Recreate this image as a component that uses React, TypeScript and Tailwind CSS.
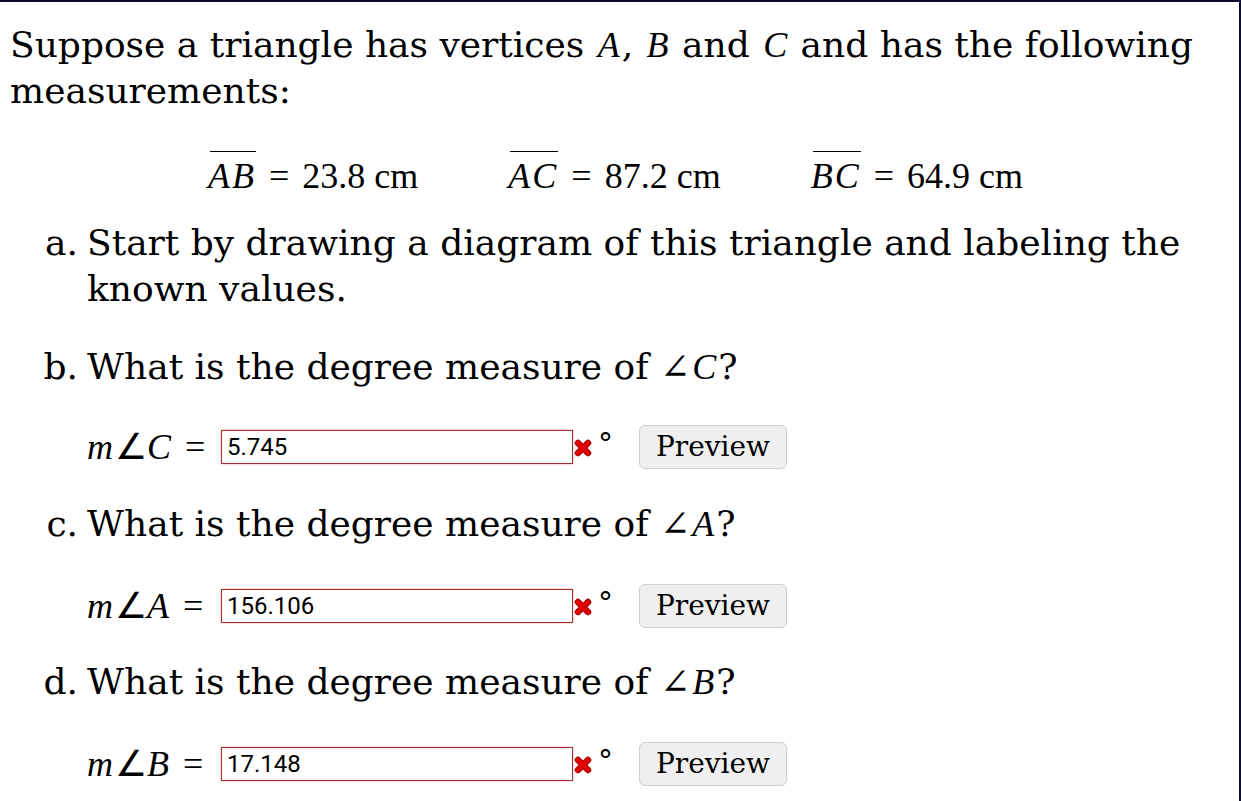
import React from 'react';

const serif = "font-['DejaVu_Serif',serif]";
const mathFont = "font-['Liberation_Serif',serif]";

const V = ({ children }: { children: React.ReactNode }) => (
  <span className={`${mathFont} italic px-[2px]`}>{children}</span>
);

const Seg = ({ name, value }: { name: string; value: string }) => (
  <span className={`${mathFont} text-[36px] leading-[40px] whitespace-nowrap`}>
    <span className="relative italic tracking-[2px]">
      <span className="absolute left-[2px] right-0 top-[-5px] h-px bg-black" />
      {name}
    </span>
    <span className="mx-[13px]">=</span>
    {value} cm
  </span>
);

const Cross = () => (
  <svg width="18" height="18" viewBox="0 0 18 18" className="shrink-0">
    <path d="M4 4 L14 14 M14 4 L4 14" stroke="#a80000" strokeWidth="6.5" strokeLinecap="round" />
    <path d="M4 4 L14 14 M14 4 L4 14" stroke="#e10000" strokeWidth="4.5" strokeLinecap="round" />
  </svg>
);

const AnswerRow = ({ angle, value, mt }: { angle: string; value: string; mt: string }) => (
  <div className={`flex items-center h-[44px] pl-[87px] ${mt}`}>
    <span className={`${mathFont} text-[36px] w-[134px] whitespace-nowrap`}>
      <span className="italic tracking-[2px]">m</span>∠<span className="italic">{angle}</span>
      <span className="ml-[14px]">=</span>
    </span>
    <div className="w-[352px] h-[34px] border border-[#a03030] shadow-[0_0_2px_#f4a0a0] flex items-center pl-[5px] font-['Roboto',sans-serif] text-[24px]">
      {value}
    </div>
    <div className="ml-[1px] mt-[2px]">
      <Cross />
    </div>
    <span className="font-['DejaVu_Sans',sans-serif] text-[30px] leading-none ml-[6px] -mt-[6px]">°</span>
    <button className={`${serif} ml-[26px] w-[148px] h-[44px] bg-[#efefef] border border-[#cfcfcf] rounded-[6px] text-[28px] leading-none`}>
      Preview
    </button>
  </div>
);

const Item = ({ mark, children, mt }: { mark: string; children: React.ReactNode; mt: string }) => (
  <div className={`flex text-[36px] leading-[46px] ${mt}`}>
    <span className="w-[78px] text-right shrink-0">{mark}</span>
    <div className="pl-[9px]">{children}</div>
  </div>
);

export default function App() {
  return (
    <div className={`w-[1241px] h-[801px] bg-white border-t-2 border-r-2 border-[#0d0b30] overflow-hidden text-black ${serif}`}>
      <p className="pl-[10px] pt-[20px] text-[36px] leading-[46px]">
        Suppose a triangle has vertices <V>A</V>, <V>B</V> and <V>C</V> and has the following
        <br />
        measurements:
      </p>

      <div className="flex justify-center gap-[90px] mt-[42px] pr-[8px]">
        <Seg name="AB" value="23.8" />
        <Seg name="AC" value="87.2" />
        <Seg name="BC" value="64.9" />
      </div>

      <Item mark="a." mt="mt-[24px]">
        Start by drawing a diagram of this triangle and labeling the
        <br />
        known values.
      </Item>

      <Item mark="b." mt="mt-[32px]">
        What is the degree measure of ∠<V>C</V>?
      </Item>
      <AnswerRow angle="C" value="5.745" mt="mt-[35px]" />

      <Item mark="c." mt="mt-[32px]">
        What is the degree measure of ∠<V>A</V>?
      </Item>
      <AnswerRow angle="A" value="156.106" mt="mt-[37px]" />

      <Item mark="d." mt="mt-[31px]">
        What is the degree measure of ∠<V>B</V>?
      </Item>
      <AnswerRow angle="B" value="17.148" mt="mt-[37px]" />
    </div>
  );
}
